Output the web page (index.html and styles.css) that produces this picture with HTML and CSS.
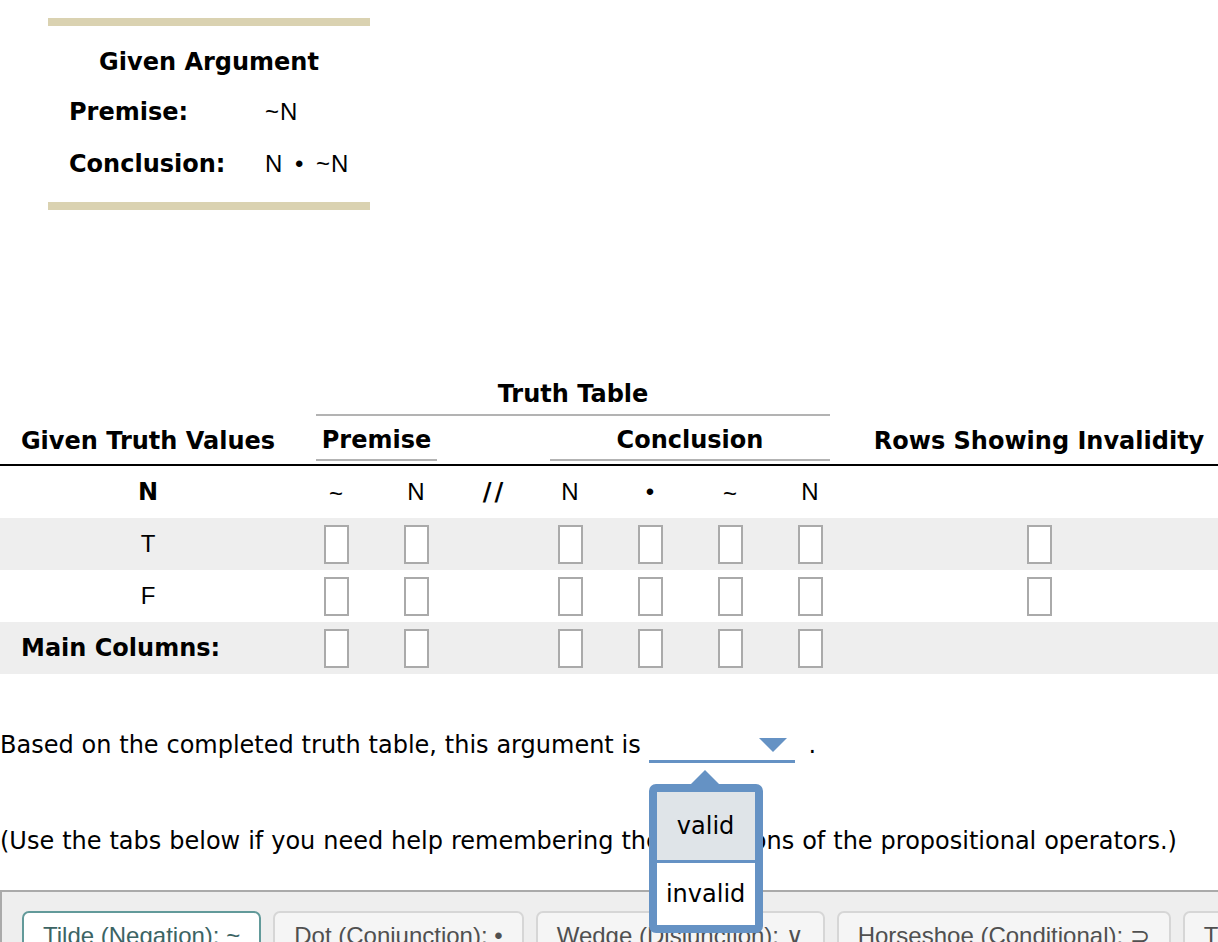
FILE: index.html
```html
<!DOCTYPE html>
<html lang="en">
<head>
<meta charset="utf-8">
<title>Truth Table</title>
<link rel="stylesheet" href="styles.css">
</head>
<body>
<main class="page">
  <section class="given">
    <div class="given-title">Given Argument</div>
    <div class="given-label">Premise:</div>
    <div class="given-val">~N</div>
    <div class="given-label">Conclusion:</div>
    <div class="given-val">N • ~N</div>
  </section>

  <section class="tt">
    <div class="tt-head">
      <div class="h-title">Truth Table</div>
      <div class="h-given">Given Truth Values</div>
      <div class="h-premise">Premise</div>
      <div class="h-concl">Conclusion</div>
      <div class="h-rows">Rows Showing Invalidity</div>
    </div>

    <div class="tt-row">
      <div class="cell lead bold">N</div>
      <div class="cell sym tilde">~</div>
      <div class="cell sym">N</div>
      <div class="cell bold slashes">//</div>
      <div class="cell sym">N</div>
      <div class="cell sym">•</div>
      <div class="cell sym tilde">~</div>
      <div class="cell sym">N</div>
      <div class="cell"></div>
    </div>

    <div class="tt-row shade">
      <div class="cell lead sym">T</div>
      <div class="cell"><span class="box"></span></div>
      <div class="cell"><span class="box"></span></div>
      <div class="cell"></div>
      <div class="cell"><span class="box"></span></div>
      <div class="cell"><span class="box"></span></div>
      <div class="cell"><span class="box"></span></div>
      <div class="cell"><span class="box"></span></div>
      <div class="cell"><span class="box"></span></div>
    </div>

    <div class="tt-row">
      <div class="cell lead sym">F</div>
      <div class="cell"><span class="box"></span></div>
      <div class="cell"><span class="box"></span></div>
      <div class="cell"></div>
      <div class="cell"><span class="box"></span></div>
      <div class="cell"><span class="box"></span></div>
      <div class="cell"><span class="box"></span></div>
      <div class="cell"><span class="box"></span></div>
      <div class="cell"><span class="box"></span></div>
    </div>

    <div class="tt-row shade">
      <div class="cell main-label bold">Main Columns:</div>
      <div class="cell"><span class="box"></span></div>
      <div class="cell"><span class="box"></span></div>
      <div class="cell"></div>
      <div class="cell"><span class="box"></span></div>
      <div class="cell"><span class="box"></span></div>
      <div class="cell"><span class="box"></span></div>
      <div class="cell"><span class="box"></span></div>
      <div class="cell"></div>
    </div>
  </section>

  <p class="based">Based on the completed truth table, this argument is <span class="select"><span class="arrow"></span><span class="caret"></span><span class="menu"><span class="opt opt-hover">valid</span><span class="opt">invalid</span></span></span> .</p>

  <p class="hint">(Use the tabs below if you need help remembering the definitions of the propositional operators.)</p>

  <nav class="tabs">
    <div class="tab active">Tilde (Negation): ~</div>
    <div class="tab">Dot (Conjunction): •</div>
    <div class="tab">Wedge (Disjunction): ∨</div>
    <div class="tab">Horseshoe (Conditional): ⊃</div>
    <div class="tab">Triple bar (Biconditional): ≡</div>
  </nav>
</main>
</body>
</html>
```

FILE: styles.css
```css
html, body {
  margin: 0;
  padding: 0;
  overflow: hidden;
  background: #ffffff;
}

body {
  font-family: "DejaVu Sans", Verdana, sans-serif;
  font-size: 24px;
  line-height: 28px;
  color: #000;
}

.page {
  width: 1228px;
}

/* Given argument box */
.given {
  margin: 18px 0 0 48px;
  width: 322px;
  box-sizing: border-box;
  border-top: 8px solid #dad2b1;
  border-bottom: 8px solid #dad2b1;
  padding: 22px 0 24px 21px;
  display: grid;
  grid-template-columns: 196px auto;
  row-gap: 24px;
}

.given-title {
  grid-column: 1 / -1;
  font-weight: bold;
  text-align: center;
  margin-left: -21px;
  margin-bottom: -2px;
}

.given-label {
  font-weight: bold;
}

.given-val {
  font-family: "Liberation Sans", Arial, sans-serif;
  word-spacing: 4px;
  letter-spacing: 1px;
}

/* Truth table */
.tt {
  margin-top: 169px;
  padding-top: 1px;
}

.tt-head,
.tt-row {
  display: grid;
  grid-template-columns: 296px 80px 80px 74px 80px 80px 80px 80px 378px;
}

.tt-head {
  font-weight: bold;
  padding-bottom: 3px;
  border-bottom: 2px solid #000;
}

.h-title {
  grid-column: 2 / 9;
  grid-row: 1;
  margin: 0 20px;
  padding-bottom: 6px;
  border-bottom: 2px solid #b3b3b3;
  text-align: center;
}

.h-given {
  grid-column: 1;
  grid-row: 2;
  padding-top: 11px;
  text-align: center;
}

.h-premise {
  grid-column: 2 / 4;
  grid-row: 2;
  margin: 0 19px 0 20px;
  padding: 10px 0 5px;
  border-bottom: 2px solid #b3b3b3;
  text-align: center;
}

.h-concl {
  grid-column: 5 / 9;
  grid-row: 2;
  margin: 0 20px;
  padding: 10px 0 5px;
  border-bottom: 2px solid #b3b3b3;
  text-align: center;
}

.h-rows {
  grid-column: 9;
  grid-row: 2;
  padding-top: 11px;
  text-align: center;
}

.tt-row {
  height: 52px;
}

.tt-row.shade {
  background: #eeeeee;
}

.cell {
  display: flex;
  align-items: center;
  justify-content: center;
}

.bold {
  font-weight: bold;
}

.sym {
  font-family: "Liberation Sans", Arial, sans-serif;
}

.tilde {
  padding-top: 4px;
}

.slashes {
  letter-spacing: 3px;
  padding-left: 3px;
}

.main-label {
  justify-content: flex-start;
  padding-left: 21px;
}

.box {
  display: block;
  width: 25px;
  height: 39px;
  box-sizing: border-box;
  border: 2px solid #aaaaaa;
  background: #ffffff;
}

/* Sentence with dropdown */
.based {
  margin: 57px 0 0;
  white-space: nowrap;
  word-spacing: 0.2px;
}

.select {
  display: inline-block;
  position: relative;
  width: 146px;
  height: 29px;
  border-bottom: 3px solid #6592c4;
  vertical-align: top;
  margin-right: 6px;
}

.arrow {
  position: absolute;
  right: 8px;
  top: 7px;
  width: 0;
  height: 0;
  border-left: 14px solid transparent;
  border-right: 14px solid transparent;
  border-top: 14px solid #6592c4;
}

.caret {
  position: absolute;
  left: 41px;
  top: 39px;
  width: 0;
  height: 0;
  border-left: 15px solid transparent;
  border-right: 15px solid transparent;
  border-bottom: 15px solid #6592c4;
  z-index: 3;
}

.menu {
  position: absolute;
  left: 0;
  top: 53px;
  width: 114px;
  box-sizing: border-box;
  border: 8px solid #6592c4;
  border-radius: 7px;
  background: #ffffff;
  display: flex;
  flex-direction: column;
  z-index: 3;
  word-spacing: normal;
}

.opt {
  display: flex;
  align-items: center;
  justify-content: center;
  height: 62px;
  color: #000;
}

.opt-hover {
  height: 68px;
  background: #dfe4e8;
  border-bottom: 3px solid #6592c4;
}

.hint {
  margin: 64px 0 0;
  white-space: nowrap;
  word-spacing: 0.3px;
}

/* Tabs */
.tabs {
  margin-top: 35px;
  height: 80px;
  box-sizing: border-box;
  border-top: 2px solid #aaaaaa;
  border-left: 2px solid #aaaaaa;
  background: #eeeeee;
  padding: 19px 0 0 20px;
  display: flex;
  gap: 12px;
  overflow: hidden;
}

.tab {
  flex-shrink: 0;
  font-family: "Liberation Sans", Arial, sans-serif;
  font-size: 24px;
  line-height: 28px;
  color: #505050;
  background: #f5f5f5;
  border: 2px solid #d6d6d6;
  border-radius: 7px;
  padding: 9px 19px 20px;
  white-space: nowrap;
}

.tab.active {
  background: #ffffff;
  border-color: #629a9a;
  color: #3c6464;
}
```
